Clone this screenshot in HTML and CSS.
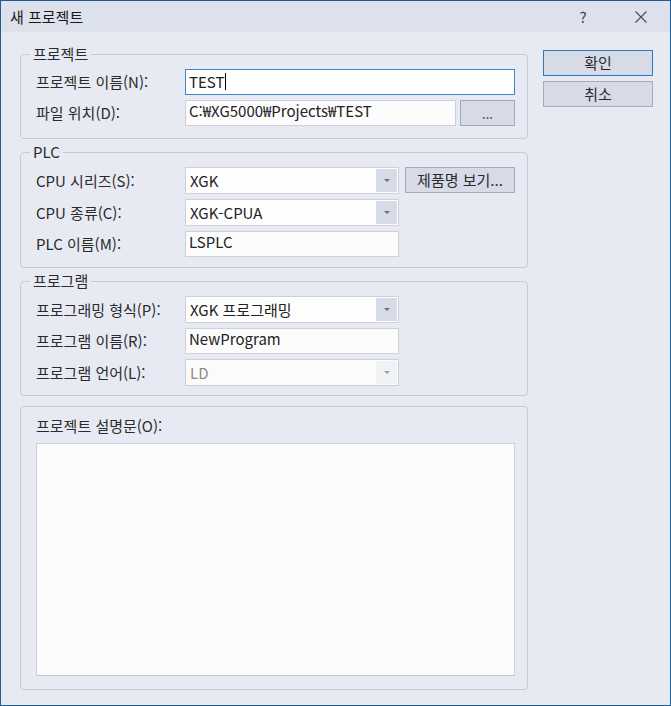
FILE: index.html
```html
<!DOCTYPE html>
<html lang="ko">
<head>
<meta charset="utf-8">
<title>새 프로젝트</title>
<link rel="stylesheet" href="styles.css">
</head>
<body>
<div class="window">
  <div class="titlebar">
    <span class="title">새 프로젝트</span>
    <span class="tb-help">?</span>
    <span class="tb-close">
      <svg width="12" height="12" viewBox="0 0 12 12"><path d="M0.5 0.5 L11.5 11.5 M11.5 0.5 L0.5 11.5" stroke="#4a4a4a" stroke-width="1.1" fill="none"/></svg>
    </span>
  </div>
  <div class="body">
    <div class="main">
      <fieldset class="group g1">
        <legend>프로젝트</legend>
        <div class="rows">
          <div class="row">
            <span class="label">프로젝트 이름(N):</span>
            <div class="edit focus wide">TEST<span class="caret"></span></div>
          </div>
          <div class="row">
            <span class="label">파일 위치(D):</span>
            <div class="edit path">C:₩XG5000₩Projects₩TEST</div>
            <button class="btn browse">...</button>
          </div>
        </div>
      </fieldset>

      <fieldset class="group g2">
        <legend>PLC</legend>
        <div class="rows">
          <div class="row">
            <span class="label">CPU 시리즈(S):</span>
            <div class="combo"><span class="combo-text">XGK</span><span class="combo-arrow"><span class="tri"></span></span></div>
            <button class="btn product">제품명 보기...</button>
          </div>
          <div class="row">
            <span class="label">CPU 종류(C):</span>
            <div class="combo"><span class="combo-text">XGK-CPUA</span><span class="combo-arrow"><span class="tri"></span></span></div>
          </div>
          <div class="row">
            <span class="label">PLC 이름(M):</span>
            <div class="edit mid">LSPLC</div>
          </div>
        </div>
      </fieldset>

      <fieldset class="group g3">
        <legend>프로그램</legend>
        <div class="rows">
          <div class="row">
            <span class="label">프로그래밍 형식(P):</span>
            <div class="combo"><span class="combo-text">XGK 프로그래밍</span><span class="combo-arrow"><span class="tri"></span></span></div>
          </div>
          <div class="row">
            <span class="label">프로그램 이름(R):</span>
            <div class="edit mid">NewProgram</div>
          </div>
          <div class="row">
            <span class="label">프로그램 언어(L):</span>
            <div class="combo disabled"><span class="combo-text">LD</span><span class="combo-arrow"><span class="tri"></span></span></div>
          </div>
        </div>
      </fieldset>

      <div class="group g4">
        <div class="desc-label">프로젝트 설명문(O):</div>
        <div class="textarea"></div>
      </div>
    </div>
    <div class="side">
      <button class="btn action default">확인</button>
      <button class="btn action">취소</button>
    </div>
  </div>
</div>
</body>
</html>
```

FILE: styles.css
```css
* { box-sizing: border-box; }

html, body {
  margin: 0;
  padding: 0;
  background: #e7eaf3;
}

body {
  font-family: "Noto Sans CJK KR", "Noto Sans", sans-serif;
  font-size: 15px;
  color: #2b2b2b;
}

.window {
  width: 671px;
  height: 706px;
  border: 1px solid #1d5d96;
  background: #e7eaf3;
  display: flex;
  flex-direction: column;
  overflow: hidden;
}

.titlebar {
  height: 31px;
  flex: none;
  background: #dde1ec;
  display: flex;
  align-items: center;
  padding-left: 9px;
  line-height: 20px;
}

.title {
  color: #1a1a1a;
  flex: 1;
}

.tb-help {
  width: 20px;
  text-align: center;
  color: #444;
  font-size: 15px;
  margin-right: 42px;
}

.tb-close {
  width: 12px;
  height: 12px;
  display: flex;
  margin-right: 23px;
}

.body {
  flex: 1;
  display: flex;
  padding: 12px 17px 0 19px;
}

.main {
  width: 508px;
  flex: none;
  display: flex;
  flex-direction: column;
}

.side {
  margin-left: 15px;
  margin-top: 6px;
  width: 110px;
  display: flex;
  flex-direction: column;
  gap: 5px;
}

.group {
  margin: 0;
  border: 1px solid #c6cad4;
  border-radius: 4px;
  padding: 5px 11px 12px 15px;
  min-width: 0;
}

.group legend {
  line-height: 20px;
  padding: 0 3px;
  margin-left: -6px;
  color: #2b2b2b;
}

.g2 { margin-top: 3px; padding-bottom: 10px; }
.g3 { margin-top: 3px; padding-bottom: 9px; }
.g4 { margin-top: 10px; padding: 9px 11px 13px 15px; }

.rows {
  display: flex;
  flex-direction: column;
  gap: 5px;
}

.row {
  display: flex;
  align-items: center;
}

.label {
  width: 149px;
  flex: none;
  line-height: 20px;
  white-space: nowrap;
}

.edit {
  height: 26px;
  border: 1px solid #cdd0d8;
  background: #fcfcfc;
  padding: 0 0 0 3px;
  line-height: 20px;
  white-space: nowrap;
  color: #222;
  display: flex;
  align-items: flex-start;
}

.edit.wide { width: 330px; }
.edit.path { width: 271px; }
.edit.mid { width: 214px; }

.edit.focus {
  border-color: #3a89cf;
  background: #ffffff;
  padding-top: 2px;
}

.caret {
  width: 1px;
  height: 17px;
  background: #000;
  margin-left: 1px;
  margin-top: 1px;
}

.combo {
  width: 214px;
  height: 27px;
  border: 1px solid #cdd0d8;
  background: #fefefe;
  display: flex;
}

.combo-text {
  flex: 1;
  padding-left: 4px;
  line-height: 25px;
  color: #222;
  white-space: nowrap;
}

.combo-arrow {
  width: 21px;
  margin: 1px 1px 1px 0;
  background: #d6dbe7;
  display: flex;
  align-items: center;
  justify-content: center;
}

.tri {
  width: 0;
  height: 0;
  border-left: 3px solid transparent;
  border-right: 3px solid transparent;
  border-top: 3px solid #6b707a;
}

.combo.disabled {
  background: #fbfbfb;
}

.combo.disabled .combo-text { color: #8c8c8c; }

.combo.disabled .combo-arrow { background: #f1f2f5; }

.combo.disabled .tri { border-top-color: #9a9da4; }

.btn {
  font-family: inherit;
  font-size: 15px;
  height: 26px;
  border: 1px solid #a4aab6;
  background: #d6dbe7;
  color: #2b2b2b;
  padding: 0;
  margin: 0;
  line-height: 20px;
  cursor: default;
}

.btn.browse {
  width: 55px;
  margin-left: 4px;
  color: #4a4a4a;
  font-size: 13px;
  padding-top: 2px;
}

.btn.product {
  width: 110px;
  margin-left: 6px;
  height: 26px;
  align-self: flex-start;
}

.btn.action {
  width: 110px;
}

.btn.default {
  border-color: #2b78be;
}

.desc-label {
  line-height: 20px;
}

.textarea {
  margin-top: 7px;
  width: 479px;
  height: 233px;
  border: 1px solid #cdd0d8;
  border-bottom-color: #c2c6cf;
  background: #fcfcfc;
}
```
